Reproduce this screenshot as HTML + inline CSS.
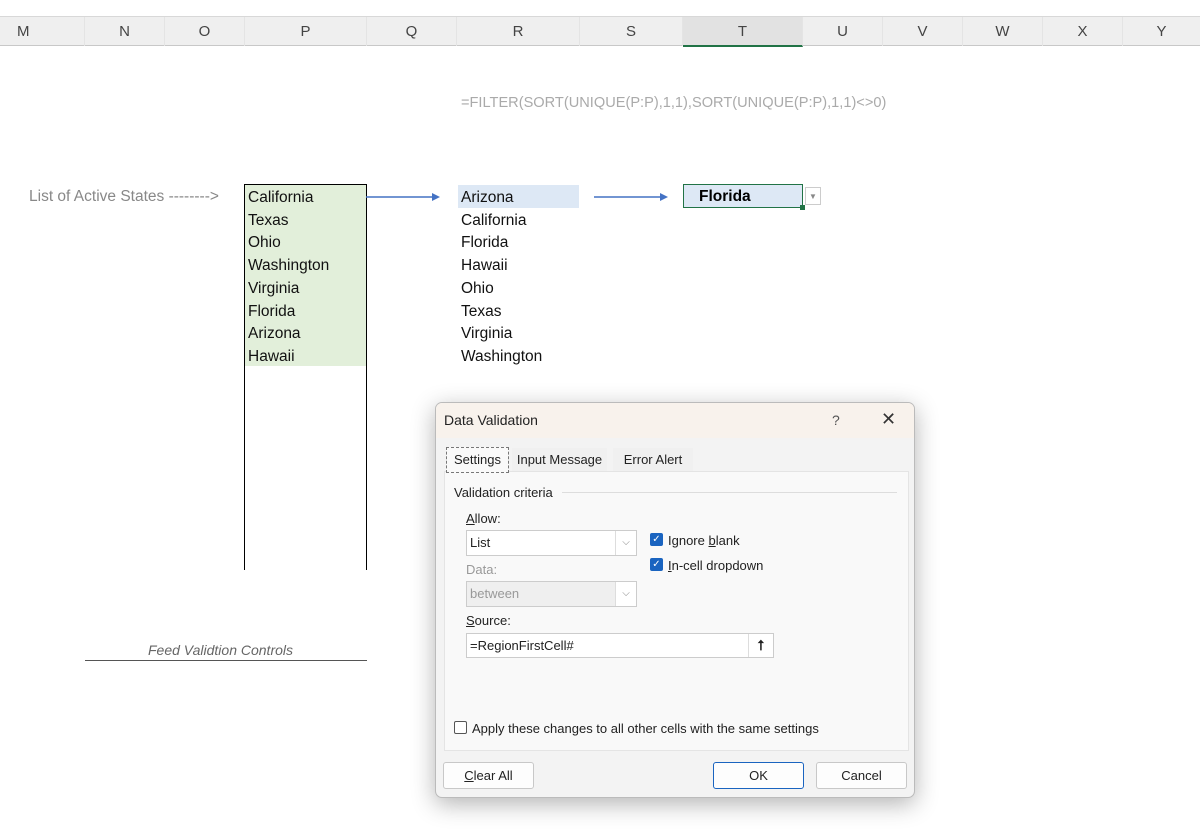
<!DOCTYPE html>
<html><head><style>
body{margin:0;width:1200px;height:838px;background:#fff;position:relative;overflow:hidden;font-family:"Liberation Sans",sans-serif}
.a{position:absolute}
.hdr{position:absolute;top:16px;left:0;width:1200px;height:30px;background:#efefef;border-top:1px solid #d8d8d8;border-bottom:1px solid #c8c8c8;box-sizing:border-box}
.col{position:absolute;top:0;height:29px;line-height:30px;text-align:center;color:#444;font-size:15px;border-right:1px solid #e4e4e4;box-sizing:border-box}
.c{font-size:15.5px;color:#111;line-height:22.7px}
.dlg{font-size:13px;color:#222}
.btn{position:absolute;height:27px;border:1px solid #c8c8c8;background:#fdfdfd;border-radius:3px;box-sizing:border-box;text-align:center;line-height:25px;font-size:13px}
.cb{position:absolute;width:13px;height:13px;background:#1a64c0;border-radius:2px;color:#fff;font-size:10px;line-height:13px;text-align:center}
</style></head><body>
<div class="hdr">
<div class="col" style="left:0;width:85px;text-align:left;padding-left:17px">M</div>
<div class="col" style="left:85px;width:80px">N</div>
<div class="col" style="left:165px;width:80px">O</div>
<div class="col" style="left:245px;width:122px">P</div>
<div class="col" style="left:367px;width:90px">Q</div>
<div class="col" style="left:457px;width:123px">R</div>
<div class="col" style="left:580px;width:103px">S</div>
<div class="col" style="left:683px;width:120px;background:#e2e2e2;border-bottom:2px solid #217346;height:30px">T</div>
<div class="col" style="left:803px;width:80px">U</div>
<div class="col" style="left:883px;width:80px">V</div>
<div class="col" style="left:963px;width:80px">W</div>
<div class="col" style="left:1043px;width:80px">X</div>
<div class="col" style="left:1123px;width:77px;border:0">Y</div>
</div>
<div class="a" style="left:461px;top:95px;font-size:14.6px;color:#aaa">=FILTER(SORT(UNIQUE(P:P),1,1),SORT(UNIQUE(P:P),1,1)&lt;&gt;0)</div>
<div class="a" style="left:29px;top:188px;font-size:15.5px;color:#888">List of Active States --------&gt;</div>
<div class="a" style="left:244px;top:184px;width:121px;height:385px;border:1px solid #000;border-bottom:0"></div>
<div class="a c" style="left:245px;top:185px;width:121px;height:181px;background:#e2efda;padding-left:3px;padding-top:2px;box-sizing:border-box">California<br>Texas<br>Ohio<br>Washington<br>Virginia<br>Florida<br>Arizona<br>Hawaii</div>
<div class="a" style="left:458px;top:185px;width:121px;height:23px;background:#dde8f5"></div>
<div class="a c" style="left:461px;top:187px">Arizona<br>California<br>Florida<br>Hawaii<br>Ohio<br>Texas<br>Virginia<br>Washington</div>
<svg class="a" style="left:366px;top:190px" width="330" height="14"><line x1="0" y1="7" x2="68" y2="7" stroke="#4472c4" stroke-width="1.5"/><path d="M66 3L74 7L66 11Z" fill="#4472c4"/><line x1="228" y1="7" x2="296" y2="7" stroke="#4472c4" stroke-width="1.5"/><path d="M294 3L302 7L294 11Z" fill="#4472c4"/></svg>
<div class="a" style="left:683px;top:184px;width:120px;height:24px;border:1px solid #217346;background:#dde8f5;box-sizing:border-box;font-weight:bold;font-size:15.5px;line-height:23px;padding-left:15px">Florida</div>
<div class="a" style="left:800px;top:205px;width:5px;height:5px;background:#217346"></div>
<div class="a" style="left:805px;top:187px;width:16px;height:18px;border:1px solid #ccc;box-sizing:border-box;color:#888;font-size:8px;text-align:center;line-height:17px">▼</div>
<div class="a" style="left:148px;top:642px;font-size:14px;color:#666;font-style:italic">Feed Validtion Controls</div>
<div class="a" style="left:85px;top:660px;width:282px;height:1px;background:#555"></div>

<div class="a dlg" style="left:435px;top:402px;width:480px;height:396px;background:#f3f3f3;border:1px solid #bbb;border-radius:7px;box-shadow:0 6px 24px rgba(0,0,0,.3);box-sizing:border-box;overflow:hidden">
<div class="a" style="left:0;top:0;width:480px;height:35px;background:#f8f2ec"></div>
<div class="a" style="left:8px;top:9px;font-size:14px">Data Validation</div>
<div class="a" style="left:396px;top:9px;font-size:14px;color:#555">?</div>
<div class="a" style="left:445px;top:6px;font-size:18px;color:#333">✕</div>
<div class="a" style="left:8px;top:68px;width:463px;height:278px;background:#f9f9f9;border:1px solid #e4e4e4"></div>
<div class="a" style="left:10px;top:44px;width:61px;height:24px;border:1px dashed #777;background:#f9f9f9;line-height:23px;text-align:center">Settings</div>
<div class="a" style="left:76px;top:45px;width:95px;height:23px;background:#f0f0f0;line-height:23px;text-align:center">Input Message</div>
<div class="a" style="left:177px;top:45px;width:80px;height:23px;background:#f0f0f0;line-height:23px;text-align:center">Error Alert</div>
<div class="a" style="left:18px;top:82px">Validation criteria</div>
<div class="a" style="left:126px;top:89px;width:335px;height:1px;background:#ddd"></div>
<div class="a" style="left:30px;top:108px"><u>A</u>llow:</div>
<div class="a" style="left:30px;top:127px;width:171px;height:26px;border:1px solid #ccc;background:#fff;box-sizing:border-box;line-height:24px;padding-left:3px">List<span style="position:absolute;right:0;top:0;width:20px;height:24px;border-left:1px solid #ddd;text-align:center;color:#888;font-size:10px">⌵</span></div>
<div class="a" style="left:30px;top:159px;color:#999">Data:</div>
<div class="a" style="left:30px;top:178px;width:171px;height:26px;border:1px solid #ccc;background:#efefef;box-sizing:border-box;line-height:24px;padding-left:3px;color:#999">between<span style="position:absolute;right:0;top:0;width:20px;height:24px;border-left:1px solid #ddd;background:#fff;text-align:center;color:#888;font-size:10px">⌵</span></div>
<div class="a" style="left:30px;top:210px"><u>S</u>ource:</div>
<div class="a" style="left:30px;top:230px;width:308px;height:25px;border:1px solid #ccc;background:#fff;box-sizing:border-box;line-height:23px;padding-left:3px">=RegionFirstCell#<span style="position:absolute;right:0;top:0;width:24px;height:23px;border-left:1px solid #ddd;text-align:center;font-weight:bold;font-size:14px">⭡</span></div>
<div class="cb" style="left:214px;top:130px">✓</div><div class="a" style="left:232px;top:130px">Ignore <u>b</u>lank</div>
<div class="cb" style="left:214px;top:155px">✓</div><div class="a" style="left:232px;top:155px"><u>I</u>n-cell dropdown</div>
<div class="a" style="left:18px;top:318px;width:11px;height:11px;border:1px solid #555;border-radius:2px;background:#fff"></div>
<div class="a" style="left:36px;top:318px">Apply these changes to all other cells with the same settings</div>
<div class="btn" style="left:7px;top:359px;width:91px"><u>C</u>lear All</div>
<div class="btn" style="left:277px;top:359px;width:91px;border:1px solid #1a64c0">OK</div>
<div class="btn" style="left:380px;top:359px;width:91px">Cancel</div>
</div>
</body></html>
